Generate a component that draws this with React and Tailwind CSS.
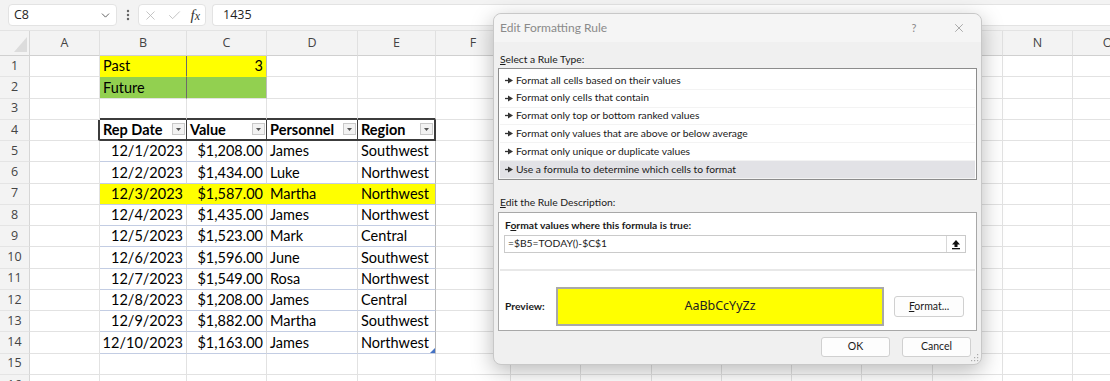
import { ChevronDown, EllipsisVertical, X, Check } from 'lucide-react';

const COLS = [
    ['A', 'w-[70px]'],
    ['B', 'w-[87px]'],
    ['C', 'w-[80px]'],
    ['D', 'w-[91px]'],
    ['E', 'w-[78px]'],
    ['F', 'w-[75px]'],
    ['G', 'w-[70.3px]'],
    ['H', 'w-[70.3px]'],
    ['I', 'w-[70.3px]'],
    ['J', 'w-[70.3px]'],
    ['K', 'w-[70.3px]'],
    ['L', 'w-[70.3px]'],
    ['M', 'w-[70.3px]'],
    ['N', 'w-[70px]'],
    ['O', 'w-[70px]'],
];

const DATA = [
    ['12/1/2023', '$1,208.00', 'James', 'Southwest'],
    ['12/2/2023', '$1,434.00', 'Luke', 'Northwest'],
    ['12/3/2023', '$1,587.00', 'Martha', 'Northwest'],
    ['12/4/2023', '$1,435.00', 'James', 'Northwest'],
    ['12/5/2023', '$1,523.00', 'Mark', 'Central'],
    ['12/6/2023', '$1,596.00', 'June', 'Southwest'],
    ['12/7/2023', '$1,549.00', 'Rosa', 'Northwest'],
    ['12/8/2023', '$1,208.00', 'James', 'Central'],
    ['12/9/2023', '$1,882.00', 'Martha', 'Southwest'],
    ['12/10/2023', '$1,163.00', 'James', 'Northwest'],
];

const HEADERS = ['Rep Date', 'Value', 'Personnel', 'Region'];

const RULES = [
    'Format all cells based on their values',
    'Format only cells that contain',
    'Format only top or bottom ranked values',
    'Format only values that are above or below average',
    'Format only unique or duplicate values',
    'Use a formula to determine which cells to format',
];

const DARK_R = 'border-r-[#3c3c3c]';
const DARK_B = 'border-b-[#3c3c3c]';

// work out borders, fill and content for one grid cell
function cellInfo(r, c) {
    const info = {
        text: null,
        bg: '',
        rw: 'border-r',
        bw: 'border-b',
        rcol: 'border-r-[#e2e2e2]',
        bcol: 'border-b-[#e2e2e2]',
        align: 'justify-start',
        bold: false,
        filter: false,
        handle: false,
    };

    if (r === 1 && c === 1) {
        Object.assign(info, { text: 'Past', bg: 'bg-[#ffff00]', rcol: 'border-r-[#6b6b6b]', bcol: 'border-b-[#ffff00]' });
    }
    if (r === 1 && c === 2) {
        Object.assign(info, { text: '3', bg: 'bg-[#ffff00]', align: 'justify-end', rcol: 'border-r-[#bdbdbd]', bcol: 'border-b-[#ffff00]' });
    }
    if (r === 2 && c === 1) {
        Object.assign(info, { text: 'Future', bg: 'bg-[#92d050]', rcol: 'border-r-[#6b6b6b]' });
    }
    if (r === 2 && c === 2) {
        Object.assign(info, { bg: 'bg-[#92d050]', rcol: 'border-r-[#bdbdbd]' });
    }
    if (r === 3 && c >= 1 && c <= 4) {
        Object.assign(info, { bw: 'border-b-2', bcol: DARK_B });
    }
    if (r === 4 && c === 0) {
        Object.assign(info, { rw: 'border-r-2', rcol: DARK_R });
    }
    if (r === 4 && c >= 1 && c <= 4) {
        Object.assign(info, {
            text: HEADERS[c - 1],
            bold: true,
            filter: true,
            bw: 'border-b-2',
            bcol: DARK_B,
            rcol: DARK_R,
            rw: c === 4 ? 'border-r-2' : 'border-r',
        });
    }
    if (r >= 5 && r <= 14 && c >= 1 && c <= 4) {
        const row = DATA[r - 5];
        const hot = r === 7;
        Object.assign(info, {
            text: row[c - 1],
            align: c <= 2 ? 'justify-end' : 'justify-start',
            bcol: 'border-b-[#c3cde3]',
            rcol: c === 4 ? 'border-r-[#b8b8b8]' : hot ? 'border-r-[#ffff00]' : 'border-r-[#dadada]',
            bg: hot ? 'bg-[#ffff00]' : '',
            handle: r === 14 && c === 4,
        });
    }
    return info;
}

function FormulaBar() {
    return (
        <div className="h-[31px] bg-[#f3f3f3] flex items-center pl-[8px] border-b border-[#e3e3e3] font-['Open_Sans',sans-serif] text-[12px] text-[#1f1f1f]">
            <div className="w-[109px] h-[22px] shrink-0 bg-white border border-[#e3e3e3] rounded-[4px] flex items-center justify-between pl-[5px] pr-[4px]">
                <span className="text-[12.5px]">C8</span>
                <ChevronDown size={13} strokeWidth={1.7} className="text-[#555]" />
            </div>
            <div className="w-[21px] shrink-0 flex justify-center">
                <EllipsisVertical size={14} strokeWidth={2.2} className="text-[#666]" />
            </div>
            <div className="w-[68px] h-[22px] shrink-0 bg-white border border-[#e3e3e3] rounded-[4px] flex items-center justify-between pl-[4px] pr-[5px]">
                <X size={15} strokeWidth={1.3} className="text-[#b8b8b8]" />
                <Check size={15} strokeWidth={1.3} className="text-[#b8b8b8]" />
                <span className="font-['Liberation_Serif',serif] italic text-[15px] leading-none text-[#333]">
                    f<span className="text-[12px]">x</span>
                </span>
            </div>
            <div className="flex-1 ml-[6px] h-[22px] bg-white border border-r-0 border-[#e3e3e3] rounded-l-[4px] flex items-center pl-[10px] text-[12.5px]">
                1435
            </div>
        </div>
    );
}

function Sheet() {
    const rows = Array.from({ length: 16 }, (_, i) => i + 1);

    return (
        <div className="flex flex-col">
            {/* Column letters */}
            <div className="flex h-[25px] font-['Open_Sans',sans-serif] text-[12.5px] text-[#444]">
                <div className="w-[30px] shrink-0 bg-[#f3f3f3] border-r border-b border-r-[#d6d6d6] border-b-[#d0d0d0] flex items-end justify-end pr-[2px] pb-[3px]">
                    <svg width="13" height="15" viewBox="0 0 13 15">
                        <polygon points="13,0 13,15 0,15" fill="#dcdcdc" />
                    </svg>
                </div>
                {COLS.map(([k, w]) => (
                    <div
                        key={k}
                        className={`${w} shrink-0 bg-[#f3f3f3] border-r border-b border-r-[#e0e0e0] border-b-[#d0d0d0] flex items-center justify-center`}
                    >
                        {k}
                    </div>
                ))}
            </div>

            {/* Rows */}
            {rows.map((r) => (
                <div key={r} className="flex h-[21.25px]">
                    <div className="w-[30px] shrink-0 bg-[#f3f3f3] border-r border-b border-r-[#d6d6d6] border-b-[#e4e4e4] flex items-center justify-center font-['Open_Sans',sans-serif] text-[12.5px] text-[#444]">
                        {r}
                    </div>
                    {COLS.map(([k, w], c) => {
                        const info = cellInfo(r, c);
                        return (
                            <div
                                key={k}
                                className={`${w} shrink-0 relative flex items-center overflow-hidden whitespace-nowrap font-['Lato',sans-serif] text-[14.5px] text-black ${info.filter ? 'pl-[3px] pr-[1px]' : 'px-[3px]'} ${info.rw} ${info.bw} ${info.rcol} ${info.bcol} ${info.align} ${info.bg} ${info.bold ? 'font-bold' : ''}`}
                            >
                                {info.text}
                                {info.filter && (
                                    <span className="ml-auto w-[13px] h-[12px] bg-[#f2f2f2] border border-[#c9c9c9] flex items-center justify-center">
                                        <svg width="5" height="3" viewBox="0 0 5 3">
                                            <path d="M0 0h5L2.5 3z" fill="#555" />
                                        </svg>
                                    </span>
                                )}
                                {info.handle && (
                                    <span className="absolute right-0 bottom-0 w-0 h-0 border-l-[5px] border-l-transparent border-b-[5px] border-b-[#4472c4]" />
                                )}
                            </div>
                        );
                    })}
                </div>
            ))}
        </div>
    );
}

function RuleArrow() {
    return (
        <svg width="8" height="7" viewBox="0 0 8 7" className="shrink-0">
            <path d="M0 3.5h3.5" stroke="#333" strokeWidth="1.3" />
            <path d="M3 0.6L8 3.5L3 6.4Z" fill="#333" />
        </svg>
    );
}

function Dialog() {
    return (
        <div className="absolute left-[493px] top-[13px] w-[489px] h-[352px] bg-[#f0f0f0] border border-[#c8c8c8] rounded-[8px] shadow-[0_6px_22px_rgba(0,0,0,0.28)] flex flex-col font-['Lato',sans-serif] text-[10.3px] text-[#1a1a1a]">
            {/* Title bar */}
            <div className="h-[28px] shrink-0 bg-[#f5f5f5] rounded-t-[8px] flex items-center justify-between pl-[6px] pr-[12px]">
                <span className="text-[12px] text-[#8a8a8a]">Edit Formatting Rule</span>
                <div className="flex items-center gap-[25px] text-[#8a8a8a]">
                    <span className="w-[20px] text-center text-[11px]">?</span>
                    <span className="w-[20px] flex justify-center">
                        <X size={14} strokeWidth={1.2} />
                    </span>
                </div>
            </div>

            <div className="flex flex-col px-[4px]">
                <div className="h-[26px] pt-[10px] pl-[2px] leading-[14px]">
                    <span className="underline">S</span>elect a Rule Type:
                </div>

                {/* Rule type list */}
                <div className="h-[112px] bg-white border border-[#8c8c8c] pt-[3px] px-[1px]">
                    {RULES.map((rule, i) => (
                        <div
                            key={rule}
                            className={`h-[17.8px] flex items-center gap-[3px] pl-[5px] border-b border-[#f3f3f3] ${i === RULES.length - 1 ? 'bg-[#e2e2e6]' : ''}`}
                        >
                            <RuleArrow />
                            <span>{rule}</span>
                        </div>
                    ))}
                </div>

                <div className="h-[32px] pt-[15px] pl-[2px] leading-[14px]">
                    <span className="underline">E</span>dit the Rule Description:
                </div>

                {/* Rule description */}
                <div className="h-[119px] bg-white border border-[#a8a8a8] flex flex-col">
                    <div className="pt-[5px] pl-[6px] leading-[14px] font-bold">
                        F<span className="underline">o</span>rmat values where this formula is true:
                    </div>
                    <div className="mt-[3px] ml-[5px] w-[462px] h-[18px] border border-[#cacaca] flex items-center justify-between pl-[3px]">
                        <span>=$B5=TODAY()-$C$1</span>
                        <span className="w-[19px] h-[16px] border-l border-[#d8d8d8] flex items-center justify-center">
                            <svg width="10" height="11" viewBox="0 0 10 11">
                                <path d="M5 1L1 5.5h2.5V8h3V5.5H9Z" fill="#111" />
                                <rect x="1" y="9" width="8" height="1.3" fill="#111" />
                            </svg>
                        </span>
                    </div>
                    <div className="mt-[16px] mx-[1px] h-[2px] bg-[#e8e8e8]" />
                    <div className="mt-[16px] h-[39px] flex items-center pl-[6px]">
                        <span className="w-[51px] font-bold">Preview:</span>
                        <div className="w-[328px] h-[39px] bg-[#ffff00] border-2 border-[#a9a9a9] flex items-center justify-center font-['Noto_Sans',sans-serif] text-[12.5px] text-[#222]">
                            AaBbCcYyZz
                        </div>
                        <button className="ml-[10px] w-[70px] h-[21px] bg-[#fdfdfd] border border-[#d0d0d0] rounded-[3px] text-[10.5px]">
                            <span className="underline">F</span>ormat...
                        </button>
                    </div>
                </div>

                {/* Buttons */}
                <div className="mt-[6px] flex justify-end gap-[12px] pr-[6px]">
                    <button className="w-[69px] h-[20px] bg-[#fdfdfd] border border-[#d0d0d0] rounded-[3px] text-[10.5px]">OK</button>
                    <button className="w-[69px] h-[20px] bg-[#fdfdfd] border border-[#d0d0d0] rounded-[3px] text-[10.5px]">Cancel</button>
                </div>
            </div>

            <svg width="8" height="8" viewBox="0 0 8 8" className="absolute right-[2px] bottom-[2px]">
                <rect x="6" y="0" width="1.2" height="1.2" fill="#aaa" />
                <rect x="3" y="3" width="1.2" height="1.2" fill="#aaa" />
                <rect x="6" y="3" width="1.2" height="1.2" fill="#aaa" />
                <rect x="0" y="6" width="1.2" height="1.2" fill="#aaa" />
                <rect x="3" y="6" width="1.2" height="1.2" fill="#aaa" />
                <rect x="6" y="6" width="1.2" height="1.2" fill="#aaa" />
            </svg>
        </div>
    );
}

export default function App() {
    return (
        <div className="relative w-[1110px] h-[381px] overflow-hidden bg-white">
            <FormulaBar />
            <Sheet />
            <Dialog />
        </div>
    );
}
